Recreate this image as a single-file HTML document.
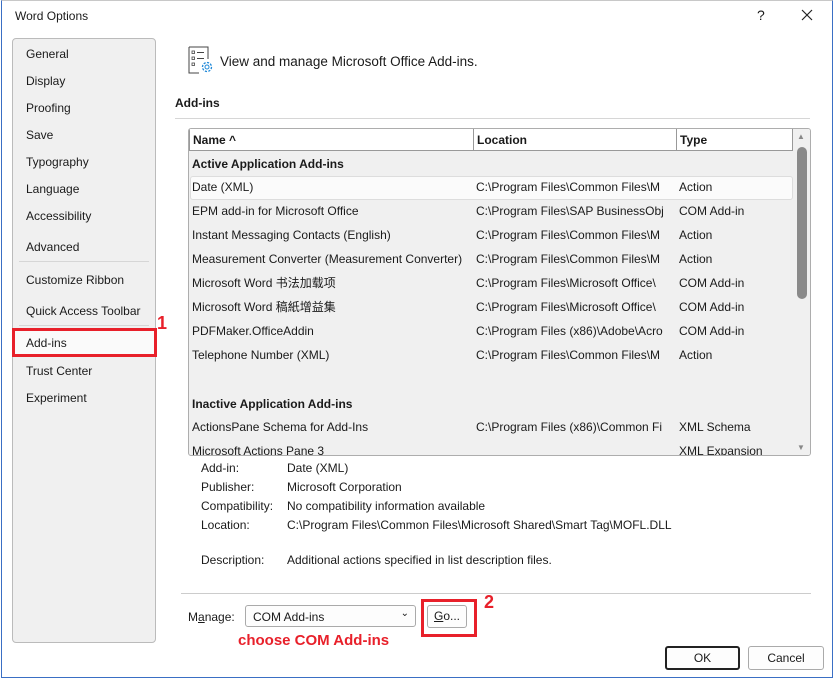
<!DOCTYPE html>
<html><head><style>
body{margin:0;width:833px;height:678px;overflow:hidden;background:#fff;font-family:"Liberation Sans","Noto Sans CJK SC",sans-serif;font-size:12px;color:#1a1a1a;position:relative}
.a{position:absolute;white-space:nowrap}
.frame{position:absolute;left:1px;top:0;width:830px;height:676px;border:1px solid #3a6fc4;border-top:1px solid #c8c8c8}
.nav{position:absolute;left:12px;top:38px;width:142px;height:603px;background:#f0f0f0;border:1px solid #bbb;border-radius:4px}
.nav div{position:absolute;left:13px}
.sep{position:absolute;left:6px;width:130px;height:1px;background:#d6d6d6}
.list{position:absolute;left:188px;top:128px;width:621px;height:326px;background:#f0f0f0;border:1px solid #adadad;border-radius:3px;overflow:hidden}
.hdr{position:absolute;top:0;height:22px;background:#fff;border:1px solid #999;border-top:none;font-weight:bold;line-height:22px;padding-left:3px;box-sizing:border-box}
.r{position:absolute;left:3px;height:24px;line-height:24px;width:600px}
.r span{position:absolute}
.red{color:#e8202a;font-weight:bold}
.btn{position:absolute;border:1px solid #aaa;border-radius:3px;background:#fdfdfd;text-align:center;box-sizing:border-box}
</style></head><body>
<div class="frame"></div>
<div class="a" style="left:15px;top:9px;font-size:12px">Word Options</div>
<div class="a" style="left:757px;top:7px;font-size:14px">?</div>
<svg class="a" style="left:801px;top:9px" width="12" height="12"><path d="M1 1L11 11M11 1L1 11" stroke="#222" stroke-width="1.2"/></svg>

<div class="nav">
<div style="top:8px">General</div>
<div style="top:35px">Display</div>
<div style="top:62px">Proofing</div>
<div style="top:89px">Save</div>
<div style="top:116px">Typography</div>
<div style="top:143px">Language</div>
<div style="top:170px">Accessibility</div>
<div style="top:201px">Advanced</div>
<div class="sep" style="top:222px;left:6px"></div>
<div style="top:234px">Customize Ribbon</div>
<div style="top:265px">Quick Access Toolbar</div>
<div class="sep" style="top:286px;left:6px"></div>
<div style="top:325px">Trust Center</div>
<div style="top:352px">Experiment</div>
</div>
<div class="a" style="left:12px;top:328px;width:139px;height:23px;border:3px solid #e8202a;background:#fafafa;box-sizing:content-box"><span style="position:absolute;left:11px;top:5px">Add-ins</span></div>
<div class="a red" style="left:157px;top:313px;font-size:18px">1</div>

<svg class="a" style="left:187px;top:45px" width="30" height="30" viewBox="0 0 30 30" fill="none">
<path d="M2 2h19v12M2 2v26h10" stroke="#444"/>
<rect x="5" y="6" width="2.5" height="2.5" stroke="#444" stroke-width=".8"/><path d="M10 7.5h7" stroke="#444"/>
<rect x="5" y="12" width="2.5" height="2.5" stroke="#444" stroke-width=".8"/><path d="M10 13.5h7" stroke="#444"/>
<rect x="5" y="18" width="2.5" height="2.5" stroke="#444" stroke-width=".8"/>
<circle cx="20" cy="22" r="4.5" stroke="#1e88d8" stroke-width="1.3" stroke-dasharray="2.2 1.3"/><circle cx="20" cy="22" r="2" stroke="#1e88d8"/>
</svg>
<div class="a" style="left:220px;top:54px;font-size:13.5px">View and manage Microsoft Office Add-ins.</div>
<div class="a" style="left:175px;top:96px;font-weight:bold">Add-ins</div>
<div class="a" style="left:175px;top:118px;width:635px;height:1px;background:#d6d6d6"></div>

<div class="list">
<div class="hdr" style="left:0;width:285px">Name ^</div>
<div class="hdr" style="left:284px;width:204px">Location</div>
<div class="hdr" style="left:487px;width:117px">Type</div>
<div class="a" style="left:3px;top:28px;font-weight:bold">Active Application Add-ins</div>
<div class="a" style="left:1px;top:47px;width:601px;height:22px;background:#fbfbfb;border:1px solid #ddd;border-radius:3px"></div>
<div class="r" style="top:46px"><span>Date (XML)</span><span style="left:284px">C:\Program Files\Common Files\M</span><span style="left:487px">Action</span></div>
<div class="r" style="top:70px"><span>EPM add-in for Microsoft Office</span><span style="left:284px">C:\Program Files\SAP BusinessObj</span><span style="left:487px">COM Add-in</span></div>
<div class="r" style="top:94px"><span>Instant Messaging Contacts (English)</span><span style="left:284px">C:\Program Files\Common Files\M</span><span style="left:487px">Action</span></div>
<div class="r" style="top:118px"><span>Measurement Converter (Measurement Converter)</span><span style="left:284px">C:\Program Files\Common Files\M</span><span style="left:487px">Action</span></div>
<div class="r" style="top:142px"><span>Microsoft Word 书法加载项</span><span style="left:284px">C:\Program Files\Microsoft Office\</span><span style="left:487px">COM Add-in</span></div>
<div class="r" style="top:166px"><span>Microsoft Word 稿紙增益集</span><span style="left:284px">C:\Program Files\Microsoft Office\</span><span style="left:487px">COM Add-in</span></div>
<div class="r" style="top:190px"><span>PDFMaker.OfficeAddin</span><span style="left:284px">C:\Program Files (x86)\Adobe\Acro</span><span style="left:487px">COM Add-in</span></div>
<div class="r" style="top:214px"><span>Telephone Number (XML)</span><span style="left:284px">C:\Program Files\Common Files\M</span><span style="left:487px">Action</span></div>
<div class="a" style="left:3px;top:268px;font-weight:bold">Inactive Application Add-ins</div>
<div class="r" style="top:286px"><span>ActionsPane Schema for Add-Ins</span><span style="left:284px">C:\Program Files (x86)\Common Fi</span><span style="left:487px">XML Schema</span></div>
<div class="r" style="top:310px"><span>Microsoft Actions Pane 3</span><span style="left:487px">XML Expansion Pack</span></div>
<div class="a" style="left:605px;top:0;width:16px;height:326px;background:#f0f0f0"></div>
<div class="a" style="left:608px;top:3px;font-size:8px;color:#888">▲</div>
<div class="a" style="left:608px;top:314px;font-size:8px;color:#888">▼</div>
<div class="a" style="left:608px;top:18px;width:10px;height:152px;background:#8a8a8a;border-radius:5px"></div>
</div>

<div class="a" style="left:201px;top:461px">Add-in:</div><div class="a" style="left:287px;top:461px">Date (XML)</div>
<div class="a" style="left:201px;top:480px">Publisher:</div><div class="a" style="left:287px;top:480px">Microsoft Corporation</div>
<div class="a" style="left:201px;top:499px">Compatibility:</div><div class="a" style="left:287px;top:499px">No compatibility information available</div>
<div class="a" style="left:201px;top:518px">Location:</div><div class="a" style="left:287px;top:518px">C:\Program Files\Common Files\Microsoft Shared\Smart Tag\MOFL.DLL</div>
<div class="a" style="left:201px;top:553px">Description:</div><div class="a" style="left:287px;top:553px">Additional actions specified in list description files.</div>
<div class="a" style="left:181px;top:593px;width:630px;height:1px;background:#ccc"></div>

<div class="a" style="left:188px;top:610px">M<u>a</u>nage:</div>
<div class="btn" style="left:245px;top:605px;width:171px;height:22px;text-align:left;padding:4px 0 0 7px">COM Add-ins<span style="position:absolute;right:6px;top:2px;font-size:10px">⌄</span></div>
<div class="a" style="left:421px;top:599px;width:50px;height:32px;border:3px solid #e8202a"></div>
<div class="btn" style="left:427px;top:605px;width:40px;height:23px;line-height:21px"><u>G</u>o...</div>
<div class="a red" style="left:484px;top:592px;font-size:18px">2</div>
<div class="a red" style="left:238px;top:632px;font-size:15px">choose COM Add-ins</div>
<div class="btn" style="left:665px;top:646px;width:75px;height:24px;border:2px solid #222;line-height:20px">OK</div>
<div class="btn" style="left:748px;top:646px;width:76px;height:24px;line-height:22px">Cancel</div>
</body></html>
